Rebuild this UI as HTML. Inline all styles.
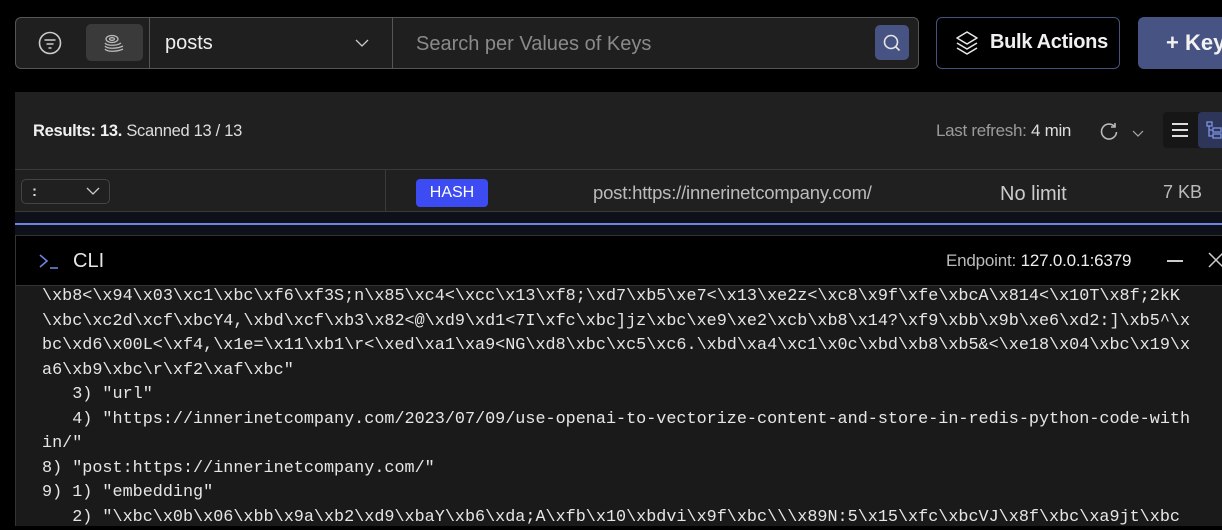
<!DOCTYPE html>
<html><head><meta charset="utf-8"><style>
*{box-sizing:border-box;margin:0;padding:0}
body{width:1222px;height:526px;background:#000;overflow:hidden;font-family:"Liberation Sans",sans-serif;color:#ddd;position:relative}
.abs{position:absolute;white-space:nowrap}
.mono{font-family:"Liberation Mono",monospace;font-size:16.8px;color:#e6e6e6;white-space:pre;line-height:24.5px}
</style></head><body>
<div class="abs" style="left:15px;top:17px;width:904px;height:52px;border:1px solid #555;border-radius:6px;background:#1f1f1f"></div>
<div class="abs" style="left:149px;top:18px;width:1px;height:50px;background:#555"></div>
<div class="abs" style="left:392px;top:18px;width:1px;height:50px;background:#555"></div>
<svg class="abs" style="left:37px;top:30px" width="26" height="26" viewBox="0 0 26 26" fill="none" stroke="#ccc" stroke-width="1.6"><circle cx="13" cy="13" r="10.5"/><path d="M7.5 10h11M9.5 14h7M11.5 18h3"/></svg>
<div class="abs" style="left:86px;top:24px;width:57px;height:37px;background:#3a3a3a;border-radius:5px"></div>
<svg class="abs" style="left:101px;top:31px" width="28" height="24" viewBox="0 0 28 24" fill="none" stroke="#bbb" stroke-width="1.3"><ellipse cx="11" cy="8" rx="6" ry="3.5"/><ellipse cx="11" cy="8" rx="2.5" ry="1.3"/><path d="M4 12c2 3 12 3 16 0M4 15c2 3 12 3 18 0M4 18c2 3 12 3 18 0"/></svg>
<div class="abs" style="left:165px;top:32px;font-size:20px;color:#eee">posts</div>
<svg class="abs" style="left:355px;top:38px" width="14" height="10" viewBox="0 0 14 10" fill="none" stroke="#ccc" stroke-width="1.3"><path d="M1 2l6 6 6-6"/></svg>
<div class="abs" style="left:416px;top:33px;font-size:20px;color:#8a8a8a">Search per Values of Keys</div>
<div class="abs" style="left:875px;top:25px;width:34px;height:35px;background:#465383;border-radius:5px"></div>
<svg class="abs" style="left:882px;top:33px" width="20" height="20" viewBox="0 0 20 20" fill="none" stroke="#e6e6e6" stroke-width="1.6"><circle cx="9" cy="9" r="6.5"/><path d="M13.5 13.5l4 4"/></svg>
<div class="abs" style="left:936px;top:17px;width:184px;height:52px;border:1px solid #46527d;border-radius:6px;background:#000"></div>
<svg class="abs" style="left:955px;top:30px" width="24" height="26" viewBox="0 0 24 26" fill="none" stroke="#e6e6e6" stroke-width="1.6" stroke-linejoin="round"><path d="M12 2L2 8l10 6 10-6z"/><path d="M2 13l10 6 10-6"/><path d="M2 18l10 6 10-6"/></svg>
<div class="abs" style="left:990px;top:31px;font-size:20px;font-weight:bold;color:#f0f0f0;letter-spacing:-0.3px">Bulk Actions</div>
<div class="abs" style="left:1138px;top:17px;width:100px;height:52px;background:#465383;border-radius:6px"></div>
<div class="abs" style="left:1166px;top:30px;font-size:22px;font-weight:bold;color:#f2f2f2">+ Key</div>
<div class="abs" style="left:15px;top:92px;width:1207px;height:127px;background:#202020"></div>
<div class="abs" style="left:33px;top:122px;font-size:16.5px;color:#ddd;letter-spacing:-0.3px"><b style="color:#f0f0f0">Results: 13.</b> Scanned 13 / 13</div>
<div class="abs" style="left:936px;top:121px;font-size:17px;color:#9a9a9a;letter-spacing:-0.3px">Last refresh: <span style="color:#ddd">4 min</span></div>
<svg class="abs" style="left:1098px;top:121px" width="22" height="22" viewBox="0 0 22 22" fill="none" stroke="#bbb" stroke-width="1.6"><path d="M17 6a7.5 7.5 0 1 0 1.5 5"/><path d="M17 2v4h-4"/></svg>
<svg class="abs" style="left:1131px;top:128px" width="14" height="10" viewBox="0 0 14 10" fill="none" stroke="#aaa" stroke-width="1.2"><path d="M2 3l5 5 5-5"/></svg>
<div class="abs" style="left:1163px;top:112px;width:45px;height:36px;background:#161616;border-radius:4px"></div>
<div class="abs" style="left:1198px;top:112px;width:30px;height:36px;background:#2d3658;border-radius:4px"></div>
<svg class="abs" style="left:1171px;top:122px" width="18" height="16" viewBox="0 0 18 16" stroke="#ddd" stroke-width="2"><path d="M1 2h16M1 8h16M1 14h16"/></svg>
<svg class="abs" style="left:1206px;top:120px" width="16" height="20" viewBox="0 0 16 20" fill="none" stroke="#7d93e0" stroke-width="1.3"><rect x="1" y="2" width="5" height="4"/><path d="M3 6v10h4M3 10h4"/><rect x="7" y="8" width="8" height="4"/><rect x="7" y="14" width="8" height="4"/></svg>
<div class="abs" style="left:15px;top:169px;width:1207px;height:1px;background:#3a3a3a"></div>
<div class="abs" style="left:385px;top:170px;width:1px;height:42px;background:#3a3a3a"></div>
<div class="abs" style="left:15px;top:211px;width:1207px;height:1px;background:#3a3a3a"></div>
<div class="abs" style="left:21px;top:179px;width:89px;height:25px;border:1px solid #444;border-radius:5px"></div>
<div class="abs" style="left:32px;top:183px;font-size:15px;color:#ddd;font-weight:bold">:</div>
<svg class="abs" style="left:86px;top:186px" width="14" height="10" viewBox="0 0 14 10" fill="none" stroke="#ccc" stroke-width="1.3"><path d="M1 2l6 6 6-6"/></svg>
<div class="abs" style="left:416px;top:179px;width:72px;height:28px;background:#3c4cf2;border-radius:4px;color:#fff;font-size:16px;text-align:center;line-height:28px">HASH</div>
<div class="abs" style="left:593px;top:182px;font-size:18.5px;color:#bbb;letter-spacing:-0.2px">post:https://innerinetcompany.com/</div>
<div class="abs" style="left:1000px;top:183px;font-size:20px;color:#ccc">No limit</div>
<div class="abs" style="left:1163px;top:182px;font-size:18px;color:#bbb">7 KB</div>
<div class="abs" style="left:15px;top:212px;width:1207px;height:23px;background:#0e111a"></div>
<div class="abs" style="left:15px;top:223px;width:1207px;height:2px;background:#6d83e0"></div>
<div class="abs" style="left:15px;top:235px;width:1207px;height:291px;background:#1a1a1a;border-left:1px solid #333;border-top:1px solid #333"></div>
<div class="abs" style="left:16px;top:236px;width:1206px;height:50px;background:#000;border-bottom:1px solid #333"></div>
<svg class="abs" style="left:38px;top:252px" width="24" height="18" viewBox="0 0 24 18" fill="none" stroke="#6d83e0" stroke-width="1.6"><path d="M2 3l7 6-7 6"/><path d="M12 16h8"/></svg>
<div class="abs" style="left:73px;top:250px;font-size:20px;color:#e6e6e6">CLI</div>
<div class="abs" style="left:946px;top:251px;font-size:17px;color:#bbb;letter-spacing:-0.2px">Endpoint: <span style="color:#eee">127.0.0.1:6379</span></div>
<div class="abs" style="left:1167px;top:260px;width:16px;height:2px;background:#ccc"></div>
<svg class="abs" style="left:1208px;top:252px" width="14" height="16" viewBox="0 0 14 16" stroke="#ccc" stroke-width="1.5"><path d="M1 1l14 14M15 1L1 15"/></svg>
<div class="abs mono" style="left:42px;top:285px">\xb8&lt;\x94\x03\xc1\xbc\xf6\xf3S;n\x85\xc4&lt;\xcc\x13\xf8;\xd7\xb5\xe7&lt;\x13\xe2z&lt;\xc8\x9f\xfe\xbcA\x814&lt;\x10T\x8f;2kK
\xbc\xc2d\xcf\xbcY4,\xbd\xcf\xb3\x82&lt;@\xd9\xd1&lt;7I\xfc\xbc]jz\xbc\xe9\xe2\xcb\xb8\x14?\xf9\xbb\x9b\xe6\xd2:]\xb5^\x
bc\xd6\x00L&lt;\xf4,\x1e=\x11\xb1\r&lt;\xed\xa1\xa9&lt;NG\xd8\xbc\xc5\xc6.\xbd\xa4\xc1\x0c\xbd\xb8\xb5&amp;&lt;\xe18\x04\xbc\x19\x
a6\xb9\xbc\r\xf2\xaf\xbc"
   3) "url"
   4) "https://innerinetcompany.com/2023/07/09/use-openai-to-vectorize-content-and-store-in-redis-python-code-with
in/"
8) "post:https://innerinetcompany.com/"
9) 1) "embedding"
   2) "\xbc\x0b\x06\xbb\x9a\xb2\xd9\xbaY\xb6\xda;A\xfb\x10\xbdvi\x9f\xbc\\\x89N:5\x15\xfc\xbcVJ\x8f\xbc\xa9jt\xbc</div>
</body></html>
